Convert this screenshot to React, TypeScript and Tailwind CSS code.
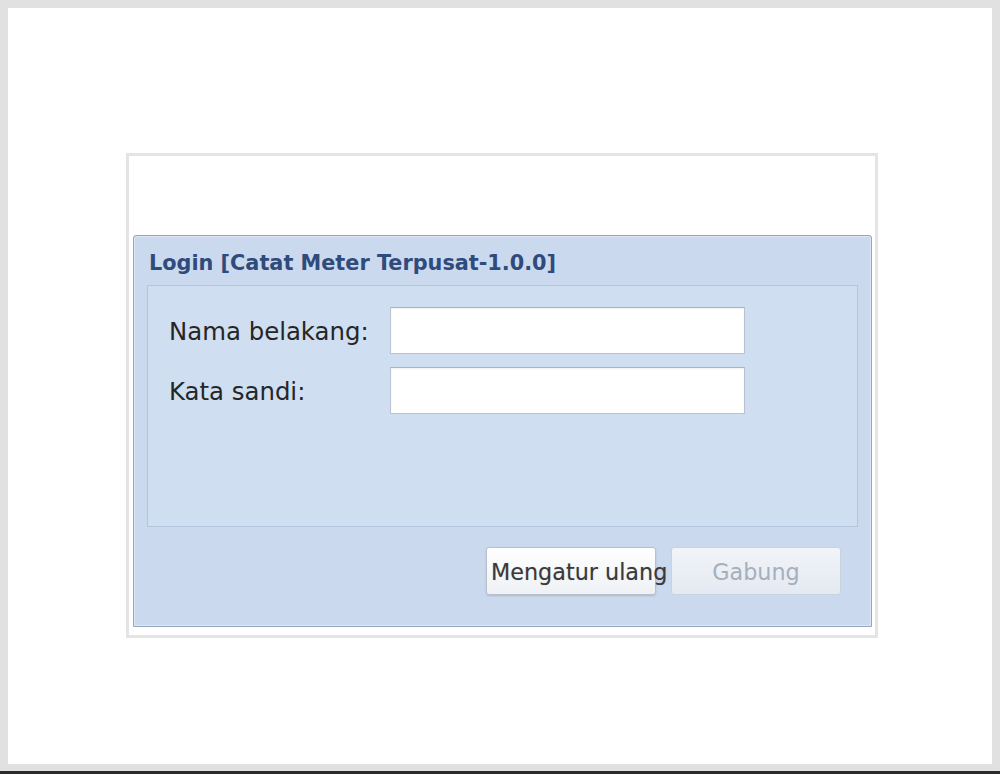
export default function App() {
  const font = { fontFamily: '"DejaVu Sans", Verdana, sans-serif' };

  return (
    <div className="w-[1000px] h-[774px] bg-[#e1e1e1] flex flex-col" style={font}>
      <div className="mx-2 mt-2 h-[756px] bg-white pt-[145px] pl-[118px]">
        {/* outer card */}
        <div className="w-[752px] h-[485px] border-[3px] border-[#e4e4e4] pt-[79px] pl-[4px] pr-[3px] pb-[8px]">
          {/* dialog */}
          <div className="h-[392px] rounded-t-[3px] border border-[#95a5bd] bg-[#cad9ee] shadow-[inset_0_0_0_1px_#dde7f5] flex flex-col">
            <div className="h-[49px] pl-[15px] pt-[15px]">
              <span className="text-[20.8px] leading-[24px] font-bold text-[#2f4b7c] whitespace-nowrap">
                Login [Catat Meter Terpusat-1.0.0]
              </span>
            </div>

            {/* form panel */}
            <div className="mx-[13px] h-[242px] border border-[#b4c5de] bg-[#d0def1] pt-[21px] pl-[21px]">
              <div className="flex items-center h-[47px]">
                <label className="w-[221px] pt-[4px] text-[24.4px] leading-none text-[#262626] whitespace-nowrap">
                  Nama belakang:
                </label>
                <input
                  type="text"
                  className="w-[355px] h-[47px] bg-white border border-[#b9c2cf] border-t-[#a9b3c2] shadow-[inset_0_1px_2px_rgba(0,0,0,0.06)] outline-none"
                />
              </div>
              <div className="flex items-center h-[47px] mt-[13px]">
                <label className="w-[221px] pt-[4px] text-[24.4px] leading-none text-[#262626] whitespace-nowrap">
                  Kata sandi:
                </label>
                <input
                  type="password"
                  className="w-[355px] h-[47px] bg-white border border-[#b9c2cf] border-t-[#a9b3c2] shadow-[inset_0_1px_2px_rgba(0,0,0,0.06)] outline-none"
                />
              </div>
            </div>

            {/* buttons */}
            <div className="flex justify-end gap-[15px] pr-[30px] mt-[20px]">
              <button
                type="button"
                className="relative w-[170px] h-[48px] rounded-[3px] border border-[#b9c1cc] bg-gradient-to-b from-white to-[#eef1f5] shadow-[0_1px_2px_rgba(0,0,0,0.15)] flex items-center pl-[4px] pt-[3px]"
              >
                <span className="text-[22.3px] leading-none text-[#3a3a3a] whitespace-nowrap [text-shadow:0_0_1px_rgba(0,0,0,0.25)]">
                  Mengatur ulang
                </span>
              </button>
              <button
                type="button"
                disabled
                className="w-[170px] h-[48px] rounded-[3px] border border-[#c9d3e0] bg-gradient-to-b from-[#f1f4f8] to-[#e4eaf2] flex items-center justify-center pt-[3px]"
              >
                <span className="text-[22.3px] leading-none text-[#a6afbd] whitespace-nowrap">Gabung</span>
              </button>
            </div>
          </div>
        </div>
      </div>
      <div className="h-[7px]" />
      <div className="h-[3px] bg-[#2b2b2b]" />
    </div>
  );
}
